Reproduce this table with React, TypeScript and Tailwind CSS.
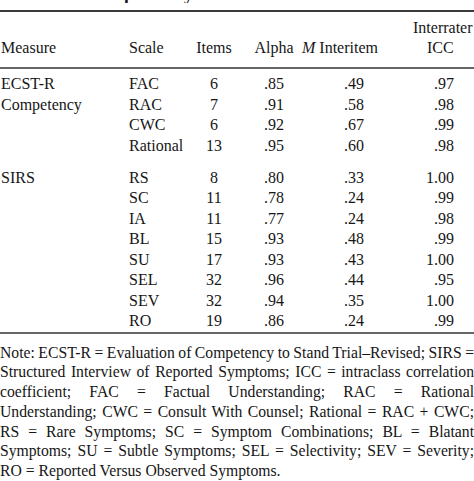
import React from 'react';

type Row = [string, string, string, string, string, string];

const ecst: Row[] = [
  ['ECST-R', 'FAC', '6', '.85', '.49', '.97'],
  ['Competency', 'RAC', '7', '.91', '.58', '.98'],
  ['', 'CWC', '6', '.92', '.67', '.99'],
  ['', 'Rational', '13', '.95', '.60', '.98'],
];

const sirs: Row[] = [
  ['SIRS', 'RS', '8', '.80', '.33', '1.00'],
  ['', 'SC', '11', '.78', '.24', '.99'],
  ['', 'IA', '11', '.77', '.24', '.98'],
  ['', 'BL', '15', '.93', '.48', '.99'],
  ['', 'SU', '17', '.93', '.43', '1.00'],
  ['', 'SEL', '32', '.96', '.44', '.95'],
  ['', 'SEV', '32', '.94', '.35', '1.00'],
  ['', 'RO', '19', '.86', '.24', '.99'],
];

// note is broken where the printed table breaks it; every line but the last is justified
const noteLines = [
  'Note: ECST-R = Evaluation of Competency to Stand Trial–Revised; SIRS =',
  'Structured Interview of Reported Symptoms; ICC = intraclass correlation',
  'coefficient; FAC = Factual Understanding; RAC = Rational',
  'Understanding; CWC = Consult With Counsel; Rational = RAC + CWC;',
  'RS = Rare Symptoms; SC = Symptom Combinations; BL = Blatant',
  'Symptoms; SU = Subtle Symptoms; SEL = Selectivity; SEV = Severity;',
];

function DataRow({ row }: { row: Row }) {
  return (
    <div className="flex h-[20.5px] items-center leading-[20.5px]">
      <div className="w-[129px] pl-[1px]">{row[0]}</div>
      <div className="w-[61px]">{row[1]}</div>
      <div className="w-[48px] text-center">{row[2]}</div>
      <div className="w-[64px] pl-[8px] text-center">{row[3]}</div>
      <div className="w-[100px] pl-[42px]">{row[4]}</div>
      <div className="w-[72px] pr-[20px] text-right">{row[5]}</div>
    </div>
  );
}

export default function App() {
  return (
    <div
      className="w-[474px] h-[481px] overflow-hidden bg-white text-[16px] text-[#161616]"
      style={{ fontFamily: '"Liberation Serif", "Times New Roman", serif' }}
    >
      {/* bottom of the caption, cut off by the crop */}
      <div className="relative h-[3px] overflow-hidden">
        <span className="absolute left-[124px] top-[-15px] text-[18px] font-bold leading-[18px]">p</span>
        <span className="absolute left-[184px] top-[-15px] text-[18px] font-bold leading-[18px]">y</span>
      </div>

      <div className="mt-[7px] h-[2px] bg-[#3a3a3a]" />

      {/* header */}
      <div className="flex pt-[6px] pb-[9px] leading-[20px]">
        <div className="w-[129px] pl-[1px] pt-[20px]">Measure</div>
        <div className="w-[61px] pt-[20px]">Scale</div>
        <div className="w-[48px] pt-[20px] text-center">Items</div>
        <div className="w-[64px] pl-[8px] pt-[20px] text-center">Alpha</div>
        <div className="w-[100px] pt-[20px]">
          <span className="italic">M</span> Interitem
        </div>
        <div className="w-[72px]">
          <div className="pl-[11px] whitespace-nowrap">Interrater</div>
          <div className="pl-[25px]">ICC</div>
        </div>
      </div>

      <div className="h-[2px] bg-[#666]" />

      <div className="pt-[5px]">
        {ecst.map((r, i) => (
          <DataRow key={i} row={r} />
        ))}
      </div>
      <div className="mt-[11.5px]">
        {sirs.map((r, i) => (
          <DataRow key={i} row={r} />
        ))}
      </div>

      <div className="h-[2px] bg-[#666]" />

      <div className="pt-[9px] text-[15.7px] leading-[19.8px]">
        {noteLines.map((l, i) => (
          <div key={i} className="whitespace-nowrap text-justify [word-spacing:-1px] [text-align-last:justify]">
            {l}
          </div>
        ))}
        <div className="whitespace-nowrap">RO = Reported Versus Observed Symptoms.</div>
      </div>
    </div>
  );
}
